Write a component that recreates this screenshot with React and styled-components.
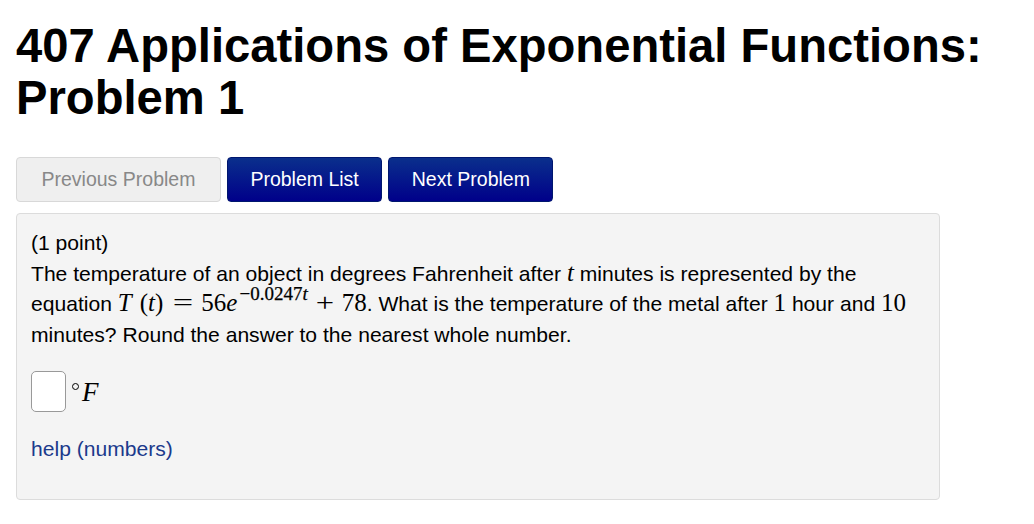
import React from "react";
import styled, { createGlobalStyle } from "styled-components";

const Global = createGlobalStyle`
  html, body { margin: 0; padding: 0; background: #fff; }
  body { font-family: "Liberation Sans", Arial, sans-serif; color: #000; }
`;

const Page = styled.div`
  padding: 20px 16px 0 16px;
`;

const Title = styled.h1`
  font-size: 47.2px;
  font-weight: bold;
  line-height: 52px;
  margin: 0 0 33px 0;
`;

const Nav = styled.div`
  display: flex;
  gap: 6px;
  margin-bottom: 11px;
`;

const NavButton = styled.button`
  font-family: "Liberation Sans", Arial, sans-serif;
  font-size: 19.5px;
  height: 45px;
  padding: 0 ${(p) => (p.disabled ? "24.5px" : "22.5px")};
  border-radius: 4px;
  cursor: pointer;
  border: 1px solid ${(p) => (p.disabled ? "#d8d8d8" : "#00166e")};
  color: ${(p) => (p.disabled ? "#888" : "#fff")};
  background: ${(p) =>
    p.disabled ? "#efefef" : "linear-gradient(to bottom, #0a2f8c, #00008a)"};
`;

const ProblemBox = styled.div`
  box-sizing: border-box;
  width: 924px;
  background: #f4f4f4;
  border: 1px solid #dcdcdc;
  border-radius: 4px;
  padding: 14px 14px 34px 14px;
  font-size: 21.1px;
  line-height: 30.5px;
`;

const Para = styled.div`
  margin: 0;
`;

const M = styled.span`
  font-family: "Liberation Serif", "DejaVu Serif", serif;
  font-size: 25px;
  line-height: 1;
  font-style: ${(p) => (p.$i ? "italic" : "normal")};
  margin: ${(p) => p.$m || "0"};
`;

const Op = styled.span`
  display: inline-block;
  font-family: "Liberation Serif", "DejaVu Serif", serif;
  font-size: 25px;
  line-height: 1;
  width: ${(p) => p.$w}px;
  text-align: center;
  transform: scaleX(${(p) => p.$s});
  margin: ${(p) => p.$m || "0"};
`;

const Sup = styled.sup`
  font-family: "Liberation Serif", "DejaVu Serif", serif;
  font-size: 19px;
  font-weight: normal;
  vertical-align: 11px;
  line-height: 0;
  margin-left: 2px;
  -webkit-text-stroke: 0.25px #000;
`;

const AnswerRow = styled.div`
  display: flex;
  align-items: center;
  margin-top: 21px;
  gap: 6px;
`;

const AnswerInput = styled.input`
  width: 31px;
  height: 37px;
  border: 1px solid #999;
  border-radius: 5px;
  background: #fff;
  box-sizing: content-box;
  padding: 1px;
  margin: 0;
`;

const Unit = styled.span`
  display: flex;
  align-items: flex-start;
  gap: 3px;
`;

const Degree = styled.span`
  width: 5px;
  height: 5px;
  border: 1.4px solid #000;
  border-radius: 50%;
  margin-top: 3px;
`;

const UnitLetter = styled.i`
  font-family: "Liberation Serif", "DejaVu Serif", serif;
  font-size: 27px;
  line-height: 22px;
  padding-top: 1px;
`;

const HelpLink = styled.a`
  display: inline-block;
  margin-top: 22px;
  color: #1b3a8c;
  text-decoration: none;
`;

export default function App() {
  return (
    <>
      <Global />
      <Page>
        <Title>
          407 Applications of Exponential Functions: Problem 1
        </Title>
        <Nav>
          <NavButton disabled>Previous Problem</NavButton>
          <NavButton>Problem List</NavButton>
          <NavButton>Next Problem</NavButton>
        </Nav>
        <ProblemBox>
          <Para>(1 point)</Para>
          <Para>
            The temperature of an object in degrees Fahrenheit after{" "}
            <M $i>t</M> minutes is represented by the equation{" "}
            <M $i $m="0 8px 0 0">T</M>
            <M>(</M>
            <M $i>t</M>
            <M $m="0 10px 0 0">)</M>
            <Op $w={20} $s={1.45} $m="0 8px 0 0">=</Op>
            <M>56</M>
            <M $i>e</M>
            <Sup>
              −0.0247<i>t</i>
            </Sup>
            <Op $w={18} $s={1.3} $m="0 8px 0 8px">+</Op>
            <M>78</M>. What is the temperature of the metal after <M>1</M>{" "}
            hour and <M>10</M> minutes? Round the answer to the nearest whole
            number.
          </Para>
          <AnswerRow>
            <AnswerInput type="text" />
            <Unit>
              <Degree />
              <UnitLetter>F</UnitLetter>
            </Unit>
          </AnswerRow>
          <HelpLink href="#">help (numbers)</HelpLink>
        </ProblemBox>
      </Page>
    </>
  );
}
